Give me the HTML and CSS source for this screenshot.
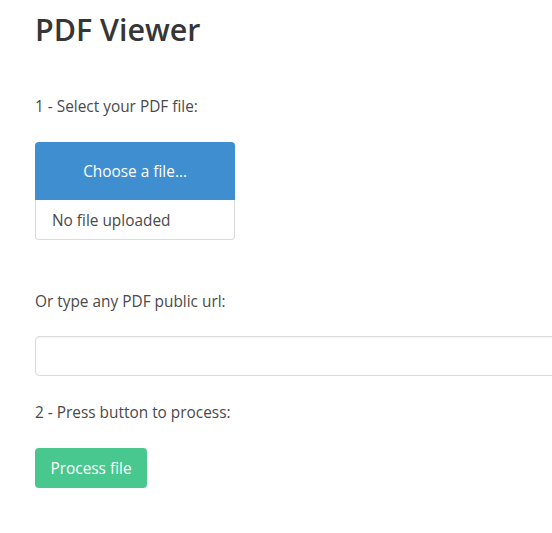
FILE: index.html
```html
<!DOCTYPE html>
<html lang="en">
<head>
<meta charset="utf-8">
<title>PDF Viewer</title>
<link rel="stylesheet" href="styles.css">
</head>
<body>
<main class="page">
  <h1 class="title">PDF Viewer</h1>
  <p class="label">1 - Select your PDF file:</p>
  <div class="file">
    <label class="file-cta">Choose a file…</label>
    <div class="file-name">No file uploaded</div>
  </div>
  <p class="label label-url">Or type any PDF public url:</p>
  <input class="input" type="text">
  <p class="label">2 - Press button to process:</p>
  <button class="button" type="button">Process file</button>
</main>
</body>
</html>
```

FILE: styles.css
```css
html, body {
  margin: 0;
  padding: 0;
  overflow: hidden;
  background: #fff;
}
body {
  font-family: "Open Sans", "Noto Sans", sans-serif;
  font-size: 15.4px;
  line-height: 24px;
  color: #4a4a4a;
}
.page {
  display: flex;
  flex-direction: column;
  align-items: flex-start;
  padding: 12px 0 0 35px;
  width: 600px;
}
.title {
  margin: 0 0 46px;
  font-size: 30.4px;
  line-height: 36px;
  font-weight: 600;
  color: #363636;
}
.label {
  margin: 0 0 24px;
  padding-top: 1px;
  height: 23px;
}
.label-url {
  margin-top: 49px;
  margin-bottom: 23px;
}
.file {
  display: flex;
  flex-direction: column;
  width: 200px;
  border-radius: 4px;
}
.file-cta {
  box-sizing: border-box;
  height: 58px;
  padding-top: 2px;
  display: flex;
  align-items: center;
  justify-content: center;
  background: #3e8ed0;
  color: #fff;
  border-radius: 4px 4px 0 0;
}
.file-name {
  box-sizing: border-box;
  display: flex;
  align-items: center;
  padding: 2px 16px 0;
  border: 1px solid #dbdbdb;
  border-top: 0;
  border-radius: 0 0 4px 4px;
  height: 40px;
}
.input {
  box-sizing: border-box;
  width: 560px;
  height: 40px;
  margin: 0 0 24px;
  border: 1px solid #dbdbdb;
  border-radius: 4px;
  box-shadow: inset 0 1px 2px rgba(10, 10, 10, 0.05);
  font: inherit;
}
.button {
  box-sizing: border-box;
  height: 40px;
  width: 112px;
  padding: 2px 0 0;
  border: 0;
  border-radius: 4px;
  background: #48c78e;
  color: #fff;
  font: inherit;
}
```
